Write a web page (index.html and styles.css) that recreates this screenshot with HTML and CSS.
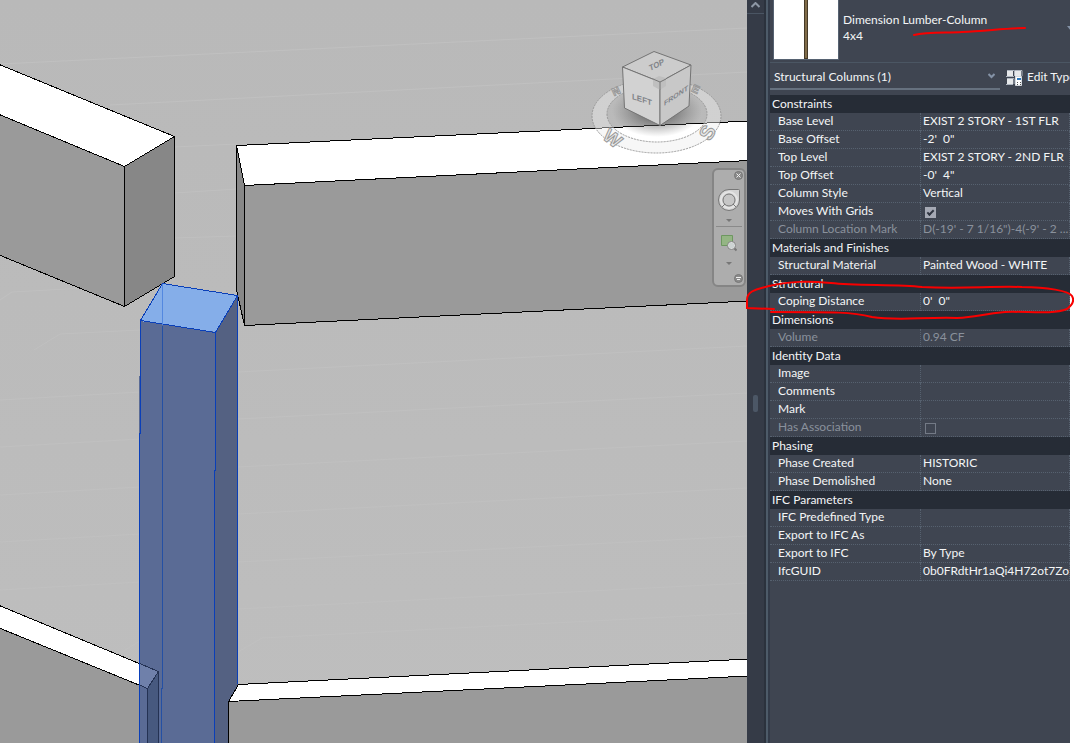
FILE: index.html
```html
<!DOCTYPE html>
<html lang="en">
    <head>
        <meta charset="UTF-8">
        <title>Properties - Dimension Lumber-Column</title>
        <link rel="stylesheet" href="styles.css">
    </head>
    <body>
        <div class="app">
            <main class="view">
                <svg class="scene" viewBox="0 0 747 743" preserveAspectRatio="xMaxYMin slice">
                    <defs>
                        <linearGradient id="sky" x1="0" y1="0" x2="0" y2="1">
                            <stop offset="0" stop-color="#b9b9b9"/>
                            <stop offset="1" stop-color="#bebebe"/>
                        </linearGradient>
                        <radialGradient id="shade">
                            <stop offset="0.3" stop-color="#555" stop-opacity="0.7"/>
                            <stop offset="1" stop-color="#777" stop-opacity="0"/>
                        </radialGradient>
                    </defs>
                    <rect width="747" height="743" fill="url(#sky)"/>
                    <g stroke="#c0c0c0" fill="none">
                        <path d="M0 64L747 28M110 105L747 72M174 147L237 144M174 193L237 189M174 238L237 236M0 300L12 292L140 285M34 350L60 334L140 330M0 400L140 392M0 447L140 439M0 495L140 487M0 542L140 534M0 590L140 582M120 653L140 641"/>
                        <path d="M238 372L747 346M238 419L747 393M238 467L747 441M238 514L747 488M238 562L747 536M238 609L747 583M238 652L262 638L747 613"/>
                    </g>

                    <!-- beams -->
                    <g stroke="#000" stroke-linejoin="round" shape-rendering="crispEdges">
                        <path fill="#fff" d="M-2 64L174.500 136.500L124.500 166.500L-2 114.500z"/>
                        <path fill="#9a9a9a" d="M-2 114L124.500 166.500V306.500L-2 254.500z"/>
                        <path fill="#878787" d="M124.500 166.500L174.500 136.500V276.500L124.500 306.500z"/>
                        <path fill="#fff" d="M236.500 145.500L749 121V160.500L244.500 185.500z"/>
                        <path fill="#878787" d="M236.500 145.500L244.500 185.500V325.500L236.500 290z"/>
                        <path fill="#9a9a9a" d="M244.500 185.500L749 160.500V301L244.500 325.500z"/>
                        <path fill="#fff" d="M-2 605L158.500 671.500L147.500 688.500L-2 627.500z"/>
                        <path fill="#9a9a9a" d="M-2 627.500L147.500 688.500V745H-2z"/>
                        <path fill="#878787" d="M147.500 688.500L158.500 671.500V745H147.500z"/>
                        <path fill="#fff" d="M238.500 684.500L749 659V676L228.500 701.500z"/>
                        <path fill="#9a9a9a" d="M228.500 701.500L749 676V745H228.500z"/>
                    </g>

                    <!-- selected column -->
                    <g shape-rendering="crispEdges">
                        <path fill="#5a6b95" d="M140 321L216 332V470L215 743H139V433z"/>
                        <path fill="#546182" d="M216 332L238 295V684L229 701V743H215V470z"/>
                        <path fill="#85aee9" d="M162 283L238 295L216 332L140 321z"/>
                        <path fill="#6f80aa" stroke="#243253" d="M139.500 663.500L158.500 671.500L147.500 688.500L139.500 685"/>
                        <path fill="#47597f" stroke="#243253" d="M147.500 745V688.500L158.500 671.500V745"/>
                        <path stroke="#0a3fb8" fill="none" d="M162.500 283.500L237.500 295.500L215.500 332.500L140.500 320.500zM140.500 321V433L139.500 434V743M215.500 332V470L214.500 471V743M237.500 295V684"/>
                        <path stroke="#2450a4" fill="none" d="M162.500 326V688L161.500 689V743"/>
                        <path stroke="#5388e0" fill="none" d="M162.500 284V325"/>
                        <path stroke="#000" d="M228.500 743V701.500L238.500 684.500" fill="none"/>
                    </g>

                    <!-- view cube -->
                    <ellipse cx="657" cy="111" rx="45" ry="26" fill="url(#shade)"/>
                    <path fill="#eee" fill-opacity="0.45" fill-rule="evenodd" stroke="#999" stroke-dasharray="2 1" d="M592 116a64.500 37 0 1 0 129 0a64.500 37 0 1 0 -129 0zM607 114a50 28 0 1 0 100 0a50 28 0 1 0 -100 0z"/>
                    <g class="compass">
                        <text transform="translate(613 138) rotate(38)" x="-9" y="7" font-size="19">W</text>
                        <text transform="translate(707 133) rotate(-60)" x="-6" y="7" font-size="20">S</text>
                        <text transform="translate(616 91) rotate(-25)" x="-4" y="4" font-size="11">N</text>
                        <text transform="translate(696 89) rotate(25)" x="-4" y="4" font-size="11">E</text>
                    </g>
                    <g stroke="#747474" stroke-linejoin="round">
                        <path fill="#ccc" d="M654 51.500L691 65L660 82L622.500 67z"/>
                        <path fill="#d2d2d2" d="M622.500 67L660 82V125.500L624.500 108z"/>
                        <path fill="#c8c8c8" d="M660 82L691 65L689 106L660 125.500z"/>
                    </g>
                    <path fill="#bfbfbf" d="M653 79L659 76L666 78V86L660 90L653 86z"/>
                    <path stroke="#747474" fill="none" d="M653 79L660 82L666 79M660 82V90"/>
                    <g class="cube-label">
                        <text transform="translate(632 99) skewY(18)" font-size="8">LEFT</text>
                        <text transform="translate(664 106) skewY(-34)" font-size="7">FRONT</text>
                        <text transform="translate(650 71) rotate(-26) skewX(-12)" font-size="8">TOP</text>
                    </g>
                </svg>

                <nav class="navbar" aria-label="Navigation bar">
                    <button class="nav-dot" aria-label="Close">
                        <svg width="9" height="9" viewBox="0 0 9 9"><circle cx="4.500" cy="4.500" r="4" fill="#8b8b8b" stroke="#777"/><path d="M2.500 2.500l4 4m0-4l-4 4" stroke="#eee"/></svg>
                    </button>
                    <button class="nav-tool wheel" aria-label="Steering wheel">
                        <svg width="22" height="22" viewBox="0 0 22 22"><path d="M11 .5H20.500Q21.500 .5 21.500 1.500V11A10.500 10.500 0 1 1 11 .5z" fill="#d3d3d3" stroke="#777"/><circle cx="11" cy="11" r="8" fill="none" stroke="#e4e4e4" stroke-width="2"/><circle cx="11" cy="11" r="6" fill="#c6c6c6" stroke="#777"/><path d="M4 18l3-3m8 0l3 3" stroke="#777"/></svg>
                    </button>
                    <button class="nav-more" aria-label="Wheel options"></button>
                    <button class="nav-tool zoom" aria-label="Zoom region">
                        <svg width="16" height="17" viewBox="0 0 16 17"><path d="M.5.500h11v10H.5z" fill="#94b584" stroke="#6d9760"/><path d="M12 12l3.500 3.500" stroke="#777" stroke-width="2"/><circle cx="10.500" cy="10.500" r="3.500" fill="#cdd3d3" stroke="#eee"/><circle cx="10.500" cy="10.500" r="4" fill="none" stroke="#858585"/></svg>
                    </button>
                    <button class="nav-more" aria-label="Zoom options"></button>
                    <button class="nav-dot last" aria-label="Customize">
                        <svg width="9" height="9" viewBox="0 0 9 9"><circle cx="4.500" cy="4.500" r="4" fill="#8b8b8b" stroke="#777"/><path d="M2 3.500h5M3 5.500h3" stroke="#eee"/></svg>
                    </button>
                </nav>
            </main>

            <aside class="dock">
                <div class="scroll">
                    <button class="scroll-up" aria-label="Scroll up">
                        <svg width="9" height="6" viewBox="0 0 9 6"><path d="M.5 5l4-4l4 4" fill="none" stroke="#8d97a5" stroke-width="2"/></svg>
                    </button>
                    <div class="scroll-thumb"></div>
                </div>
                <section class="panel">
                    <button class="type">
                        <span class="thumb"><span class="post"></span></span>
                        <span class="type-name">Dimension Lumber-Column<br>4x4</span>
                        <svg class="type-arrow" width="8" height="5" viewBox="0 0 8 5"><path d="M0 0h8L4 5z" fill="#8492a6"/></svg>
                    </button>
                    <div class="filter">
                        <div class="select">
                            <select aria-label="Category">
                                <option>Structural Columns (1)</option>
                            </select>
                            <svg width="7" height="6" viewBox="0 0 7 6"><path d="M.5 1l3 3l3-3" fill="none" stroke="#8492a6" stroke-width="2"/></svg>
                        </div>
                        <button class="edit-type">
                            <svg width="17" height="17" viewBox="0 0 17 17"><path d="M1 2h6v5H1zM9 2h6v5H9zM1 10h6v5H1z" fill="#e6e8ea"/><path d="M1 1.500h7.500V7M9 1.500h7V7M1 9.500h7V15M0 7.500h8M9 7.500h6M0 15.500h7" fill="none" stroke="#aeb5bf"/><path d="M9.500 7.500h6v9h-6z" fill="#fff" stroke="#d4d9df"/><path d="M11 9h4v2h-4z" fill="#2e78bb"/><path d="M11 13.500h1m2 0h1M11 15.500h1m2 0h1" stroke="#555"/></svg>
                            <span>Edit Type</span>
                        </button>
                    </div>
                    <table class="props">
                        <tbody>
                            <tr class="group"><th colspan="2">Constraints</th></tr>
                            <tr><th>Base Level</th><td>EXIST 2 STORY - 1ST FLR</td></tr>
                            <tr><th>Base Offset</th><td>-2'&nbsp; 0"</td></tr>
                            <tr><th>Top Level</th><td>EXIST 2 STORY - 2ND FLR</td></tr>
                            <tr><th>Top Offset</th><td>-0'&nbsp; 4"</td></tr>
                            <tr><th>Column Style</th><td>Vertical</td></tr>
                            <tr><th><label for="grids">Moves With Grids</label></th><td><input type="checkbox" id="grids" checked></td></tr>
                            <tr class="off"><th>Column Location Mark</th><td>D(-19' - 7 1/16")-4(-9' - 2 ...</td></tr>
                        </tbody>
                        <tbody>
                            <tr class="group"><th colspan="2">Materials and Finishes</th></tr>
                            <tr><th>Structural Material</th><td>Painted Wood - WHITE</td></tr>
                        </tbody>
                        <tbody>
                            <tr class="group"><th colspan="2">Structural</th></tr>
                            <tr><th>Coping Distance</th><td>0'&nbsp; 0"</td></tr>
                        </tbody>
                        <tbody>
                            <tr class="group"><th colspan="2">Dimensions</th></tr>
                            <tr class="off"><th>Volume</th><td>0.94 CF</td></tr>
                        </tbody>
                        <tbody>
                            <tr class="group"><th colspan="2">Identity Data</th></tr>
                            <tr><th>Image</th><td></td></tr>
                            <tr><th>Comments</th><td></td></tr>
                            <tr><th>Mark</th><td></td></tr>
                            <tr class="off"><th><label for="assoc">Has Association</label></th><td><input type="checkbox" id="assoc" disabled></td></tr>
                        </tbody>
                        <tbody>
                            <tr class="group"><th colspan="2">Phasing</th></tr>
                            <tr><th>Phase Created</th><td>HISTORIC</td></tr>
                            <tr><th>Phase Demolished</th><td>None</td></tr>
                        </tbody>
                        <tbody>
                            <tr class="group"><th colspan="2">IFC Parameters</th></tr>
                            <tr><th>IFC Predefined Type</th><td></td></tr>
                            <tr><th>Export to IFC As</th><td></td></tr>
                            <tr><th>Export to IFC</th><td>By Type</td></tr>
                            <tr><th>IfcGUID</th><td>0b0FRdtHr1aQi4H72ot7Zo</td></tr>
                        </tbody>
                    </table>
                </section>

                <!-- red pen marks -->
                <svg class="pen" width="327" height="330" viewBox="0 0 327 330">
                    <path d="M167 35C180 32 200 33 215 32C240 31 258 28 278 28"/>
                    <path d="M27 309L0 308L0 300C0 292 6 290 22 286C45 281 60 281 84 283C110 286 150 284 175 287C215 289 245 286 275 287C300 287 322 291 325 296C328 301 324 306 320 309C305 315 280 311 258 312C235 314 230 317 210 318C175 317 150 321 125 317C105 312 90 312 24 312"/>
                </svg>
            </aside>
        </div>
    </body>
</html>
```
FILE: styles.css
```css
body {
    margin: 0;
    font: 12px/18px Lato, "Open Sans", sans-serif;
    color: #f4f5f6;
    background: #fff;
}

button {
    margin: 0;
    padding: 0;
    border: 0;
    background: none;
    font: inherit;
    color: inherit;
}

svg {
    display: block;
    flex: none;
}

.app {
    display: flex;
    min-height: 100vh;
}

/* 3D view */

.view {
    position: relative;
    flex: 1;
    min-width: 0;
    background: #bbb;
}

.scene {
    position: absolute;
    width: 100%;
    height: 100%;
}

.compass text {
    font-family: "Liberation Sans", sans-serif;
    font-weight: bold;
    fill: #ddd;
    fill-opacity: 0.6;
    stroke: #999;
}

.cube-label text {
    font-family: "Liberation Sans", sans-serif;
    font-weight: bold;
    fill: #808388;
}

.navbar {
    position: absolute;
    top: 168px;
    right: 1px;
    box-sizing: border-box;
    width: 34px;
    display: flex;
    flex-direction: column;
    align-items: center;
    background: #adadad;
    border: 2px solid #858585;
    border-radius: 6px;
}

.nav-dot {
    align-self: flex-end;
    margin: 1px 1px 0 0;
}

.nav-dot.last {
    margin: 3px 1px 2px 0;
}

.wheel {
    padding: 9px 0 8px;
}

.zoom {
    width: 26px;
    padding: 8px 5px;
    border-top: 1px solid #8a8a8a;
}

.nav-more {
    width: 0;
    border: 3px solid transparent;
    border-top-color: #777;
    border-bottom: 0;
    margin-bottom: 4px;
}

.zoom + .nav-more {
    margin: 2px 0 6px;
}

/* properties palette */

.dock {
    position: relative;
    flex: none;
    display: flex;
    width: 323px;
    margin-right: 4px;
}

.scroll {
    display: flex;
    flex-direction: column;
    align-items: center;
    width: 17px;
    background: #353b47;
}

.scroll-up {
    width: 17px;
    height: 14px;
    padding: 2px 4px 6px;
    border-bottom: 1px solid #4a5563;
}

.scroll-thumb {
    width: 5px;
    height: 17px;
    margin-top: 381px;
    border-radius: 2px;
    background: #4c5766;
}

.panel {
    flex: 1;
    min-width: 0;
    overflow: hidden;
    background: #3f4551;
    border-left: 2px solid #2b323d;
    box-shadow: inset 2px 0 #4d5b69, inset 4px 0 #333b49;
    padding-left: 4px;
}

.type {
    display: flex;
    align-items: flex-start;
    width: 100%;
    height: 63px;
    padding-left: 3px;
    border-bottom: 1px solid #4b5663;
    text-align: left;
    line-height: 16px;
}

.thumb {
    width: 64px;
    height: 59px;
    border: 1px solid #566271;
    border-top: 0;
    background: #fff;
}

.post {
    display: block;
    width: 2px;
    height: 58px;
    margin-left: 30px;
    background: #806c49;
    border: solid #453a28;
    border-width: 0 1px 1px;
}

.type-name {
    flex: 1;
    padding: 12px 0 0 4px;
}

.type-arrow {
    margin: 26px -5px 0 0;
}

.filter {
    display: flex;
    height: 32px;
}

.select {
    display: flex;
    align-items: center;
    flex: 1;
    height: 25px;
    padding-right: 5px;
    border-bottom: 2px solid #66717f;
}

.select select {
    flex: 1;
    appearance: none;
    padding: 2px 4px 0;
    border: 0;
    background: none;
    color: inherit;
    font: inherit;
}

.edit-type {
    display: flex;
    align-items: center;
    gap: 4px;
    width: 64px;
    height: 28px;
    margin-left: 6px;
    white-space: nowrap;
}

.props {
    width: 100%;
    table-layout: fixed;
    border-collapse: separate;
    border-spacing: 0;
}

.props th,
.props td {
    box-sizing: border-box;
    height: 18px;
    padding: 0 2px;
    border-bottom: 1px dotted #56616f;
    font-weight: normal;
    line-height: 16px;
    vertical-align: top;
    text-align: left;
    white-space: nowrap;
}

.props th {
    padding-left: 8px;
}

.props td {
    border-left: 1px dotted #56616f;
    border-right: 1px dotted #56616f;
}

.props .group th {
    padding-left: 2px;
    border-bottom-color: #262c36;
    background: #262c36;
    line-height: 17px;
}

.props .off {
    color: #8a919c;
}

.props input {
    display: block;
    appearance: none;
    box-sizing: border-box;
    width: 11px;
    height: 11px;
    margin: 4px 0 0 2px;
    border: 1px solid #737a86;
}

.props input:checked {
    background: #a5a9b4;
    border-color: #a5a9b4;
}

.props input:checked::before {
    content: "";
    display: block;
    width: 5px;
    height: 2px;
    margin: 2px 0 0 1px;
    border: solid #2f3541;
    border-width: 0 0 2px 2px;
    transform: rotate(-45deg);
    box-sizing: content-box;
}

.pen {
    position: absolute;
    top: 0;
    left: 0;
    overflow: visible;
    pointer-events: none;
}

.pen path {
    fill: none;
    stroke: #f80000;
    stroke-width: 2;
    stroke-linecap: round;
}
```
